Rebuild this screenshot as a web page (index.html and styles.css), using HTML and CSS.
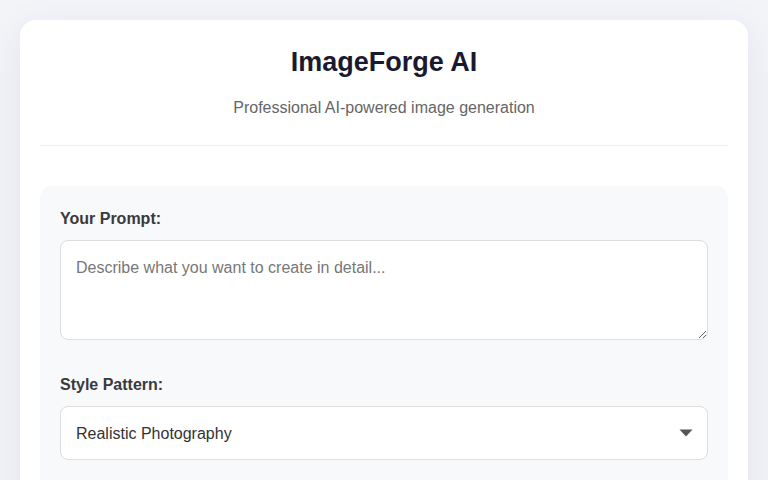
FILE: index.html
```html
<!DOCTYPE html>
<html lang="en">
<head>
<meta charset="utf-8">
<title>ImageForge AI</title>
<link rel="stylesheet" href="styles.css">
</head>
<body>
<div class="card">
  <header class="header">
    <h1 class="title">ImageForge AI</h1>
    <p class="subtitle">Professional AI-powered image generation</p>
  </header>
  <section class="form-section">
    <div class="form-group">
      <label class="label" for="prompt">Your Prompt:</label>
      <textarea id="prompt" class="textarea" placeholder="Describe what you want to create in detail..."></textarea>
    </div>
    <div class="form-group">
      <label class="label" for="style">Style Pattern:</label>
      <div class="select-wrap">
        <select id="style" class="select">
          <option>Realistic Photography</option>
          <option>Digital Art</option>
          <option>Oil Painting</option>
        </select>
        <svg class="caret" width="14" height="8" viewBox="0 0 14 8"><path d="M0.5 0.5 H13.5 L7 7.5 Z" fill="#555"/></svg>
      </div>
    </div>
  </section>
</div>
</body>
</html>
```
FILE: styles.css
```css
* { box-sizing: border-box; }
html, body { margin: 0; }
body {
  background: #f3f4f8;
  font-family: "Liberation Sans", Arial, sans-serif;
  padding: 20px;
  height: 480px;
  overflow: hidden;
}
.card {
  background: #fff;
  border-radius: 16px;
  box-shadow: 0 10px 40px rgba(40, 50, 90, 0.08);
  padding: 20px;
  min-height: 600px;
}
.header {
  text-align: center;
  padding-top: 6px;
  padding-bottom: 28px;
  border-bottom: 1px solid #eeeeee;
}
.title {
  margin: 0;
  font-size: 27px;
  line-height: 32px;
  font-weight: 700;
  color: #1a1a2e;
}
.subtitle {
  margin: 21px 0 0;
  font-size: 16px;
  line-height: 18px;
  color: #666;
}
.form-section {
  margin-top: 40px;
  background: #f8f9fb;
  border-radius: 12px;
  padding: 24px 20px 22px;
}
.form-group { margin-bottom: 36px; }
.label {
  display: block;
  font-size: 16px;
  line-height: 18px;
  font-weight: 700;
  color: #3a3a3a;
  margin-bottom: 12px;
}
.textarea {
  display: block;
  width: 100%;
  height: 100px;
  padding: 15px;
  border: 1px solid #dddddd;
  border-radius: 8px;
  background: #fff;
  font-family: "Liberation Sans", Arial, sans-serif;
  font-size: 16px;
  line-height: 24px;
  color: #333;
  resize: vertical;
}
.textarea::placeholder { color: #777; }
.select-wrap { position: relative; }
.select {
  display: block;
  width: 100%;
  height: 54px;
  padding: 0 15px;
  border: 1px solid #dddddd;
  border-radius: 8px;
  background: #fff;
  font-family: "Liberation Sans", Arial, sans-serif;
  font-size: 16px;
  color: #333;
  appearance: none;
  -webkit-appearance: none;
}
.caret {
  position: absolute;
  right: 15px;
  top: 23px;
  pointer-events: none;
}
```
